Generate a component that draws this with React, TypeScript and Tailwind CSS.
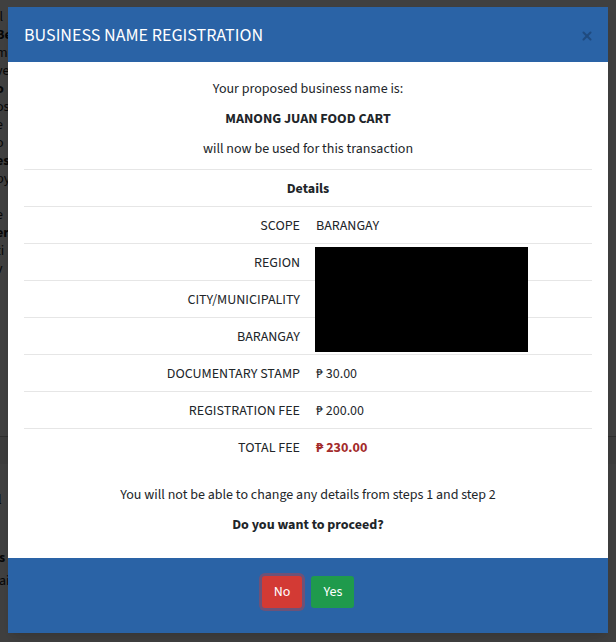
import { X } from "lucide-react";

const rows: { label: string; value?: string; hidden?: boolean; total?: boolean }[] = [
  { label: "SCOPE", value: "BARANGAY" },
  { label: "REGION", hidden: true },
  { label: "CITY/MUNICIPALITY", hidden: true },
  { label: "BARANGAY", hidden: true },
  { label: "DOCUMENTARY STAMP", value: "₱ 30.00" },
  { label: "REGISTRATION FEE", value: "₱ 200.00" },
  { label: "TOTAL FEE", value: "₱ 230.00", total: true },
];

// bits of the page behind the overlay that peek out at the left edge
const leftLines = ["il", "Be", "m", "ve", "o", "os", "e", "o", "es", "py", "", "e", "er", "ti", " v"];
const boldLines = [1, 4, 8, 12];

function BackgroundPage() {
  return (
    <div className="h-[642px] w-full bg-white text-[#222] text-[14px] font-['Source_Sans_3',Lato,sans-serif]">
      <div className="w-[10px] overflow-hidden whitespace-nowrap pt-[8px] leading-[18px]">
        <div className="-ml-[4px]">
          {leftLines.map((l, i) => (
            <div key={i} className={boldLines.includes(i) ? "font-bold" : ""}>
              {l || "\u00a0"}
            </div>
          ))}
        </div>
      </div>
      <div className="mt-[158px] border-t border-[#bbb] h-[28px] bg-[#f4f4f4]" />
      <div className="pt-[26px] -ml-[2px]">l</div>
      <div className="flex justify-between pt-[36px] leading-[23px]">
        <div className="-ml-[1px]">
          <div className="font-bold">s</div>
          <div>ai</div>
        </div>
        <div className="w-[30px]">
          <div className="font-bold">IN</div>
          <div>of</div>
          <div>of</div>
          <div>c</div>
          <div>o</div>
        </div>
      </div>
    </div>
  );
}

export default function App() {
  return (
    <div className="relative h-[642px] w-full overflow-hidden">
      <BackgroundPage />
      <div className="absolute inset-0 bg-black/75" />

      <div className="absolute left-[8px] right-[8px] top-[7px] bg-white shadow-lg text-[#212529] font-['Source_Sans_3',Lato,sans-serif]">
        <div className="flex items-center justify-between bg-[#2a63a6] h-[55px] px-4 pt-[2px]">
          <h4 className="text-white text-[18px] leading-none">BUSINESS NAME REGISTRATION</h4>
          <button className="text-[#1d4677] opacity-80 -mr-[2px]">
            <X size={14} strokeWidth={3.5} />
          </button>
        </div>

        <div className="px-4 pt-[17px] pb-[22px] text-[14px] leading-[21px]">
          <div className="text-center">
            <p className="mb-[9px]">Your proposed business name is:</p>
            <p className="mb-[9px] font-bold">MANONG JUAN FOOD CART</p>
            <p className="mb-[9px]">will now be used for this transaction</p>
          </div>

          <div className="relative">
            <table className="w-full border-collapse leading-[20px]">
              <tbody>
                <tr className="border-t border-[#e6e6e6]">
                  <td colSpan={2} className="pt-[9px] pb-[7px] text-center font-bold">Details</td>
                </tr>
                {rows.map((r) => (
                  <tr key={r.label} className="border-t border-[#e6e6e6]">
                    <td className="w-1/2 pt-[9px] pb-[7px] pr-2 text-right">{r.label}</td>
                    <td
                      className={
                        r.total
                          ? "w-1/2 pt-[9px] pb-[7px] pl-2 font-bold text-[#a32b2b]"
                          : "w-1/2 pt-[9px] pb-[7px] pl-2"
                      }
                    >
                      {r.hidden ? "\u00a0" : r.value}
                    </td>
                  </tr>
                ))}
              </tbody>
            </table>
            {/* redaction box drawn over the region / city / barangay values */}
            <div className="absolute left-[291px] top-[78px] w-[213px] h-[105px] bg-black" />
          </div>

          <div className="text-center mt-[20px]">
            <p className="mb-[9px]">You will not be able to change any details from steps 1 and step 2</p>
            <p className="font-bold">Do you want to proceed?</p>
          </div>
        </div>

        <div className="flex justify-center gap-[9px] bg-[#2a63a6] h-[75px] pt-[18px]">
          <button className="h-[32px] px-[12px] text-white text-[14px] bg-[#d33a34] rounded-[3px] ring-[3px] ring-[#d33a34]/40">
            No
          </button>
          <button className="h-[32px] px-[12px] text-white text-[14px] bg-[#1f9a4c] rounded-[3px]">
            Yes
          </button>
        </div>
      </div>
    </div>
  );
}
